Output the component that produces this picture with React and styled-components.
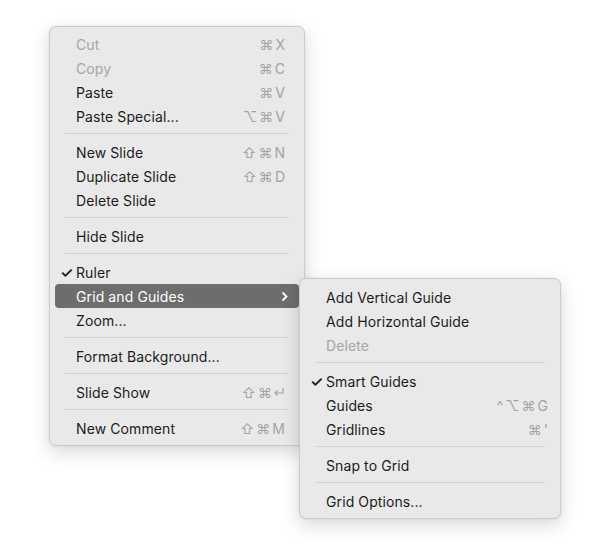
import React from 'react';
import styled, { createGlobalStyle } from 'styled-components';

const GlobalStyle = createGlobalStyle`
  body {
    margin: 0;
    background: #ffffff;
    font-family: Inter, "Noto Sans", "Liberation Sans", sans-serif;
    -webkit-font-smoothing: antialiased;
  }
`;

const Page = styled.div`
  width: 600px;
  height: 551px;
  padding: 26px 0 0 49px;
  box-sizing: border-box;
`;

const Menu = styled.div`
  position: relative;
  width: ${(p) => p.$width}px;
  box-sizing: border-box;
  padding: 5px 5px 5px;
  background: #e9e9e9;
  border: 1px solid #cbcbcb;
  border-radius: 7px;
  box-shadow: 0 6px 18px rgba(0, 0, 0, 0.16), 0 0 2px rgba(0, 0, 0, 0.08);
  display: flex;
  flex-direction: column;
`;

const SubMenu = styled(Menu)`
  position: absolute;
  left: 244px;
  top: -6px;
  z-index: 2;
  padding-top: 6px;
`;

const Item = styled.div`
  position: relative;
  height: 24px;
  display: flex;
  align-items: center;
  padding: 0 ${(p) => p.$padRight}px 0 21px;
  border-radius: 4px;
  font-size: 14px;
  letter-spacing: 0.1px;
  color: ${(p) => (p.$active ? '#ffffff' : p.$disabled ? '#a6a6a6' : '#1c1c1c')};
  background: ${(p) => (p.$active ? '#6d6d6d' : 'transparent')};
`;

const Check = styled.span`
  position: absolute;
  left: 5px;
  font-size: 15px;
  font-weight: 600;
`;

const Label = styled.span`
  flex: 1;
`;

const Shortcut = styled.span`
  color: #a3a3a3;
  font-size: 14px;
  letter-spacing: 2px;
  margin-right: -2px;
`;

const Arrow = styled.svg`
  width: 7px;
  height: 11px;
  margin-right: -3px;
`;

const Separator = styled.div`
  height: 1px;
  margin: 5px 10px 6px;
  background: #d2d2d2;
`;

function ReturnGlyph() {
  return (
    <svg width="13" height="11" viewBox="0 0 13 11" style={{ verticalAlign: '-1px' }}>
      <path d="M11 1 V6 H3 M5.5 3.5 L3 6 L5.5 8.5" fill="none" stroke="#a3a3a3" strokeWidth="1.2" />
    </svg>
  );
}

function MenuItem({ label, shortcut, disabled, checked, active, children, padRight = 14 }) {
  return (
    <Item $disabled={disabled} $active={active} $padRight={padRight}>
      {checked && <Check>✓</Check>}
      <Label>{label}</Label>
      {shortcut && <Shortcut>{shortcut}</Shortcut>}
      {children}
    </Item>
  );
}

export default function App() {
  return (
    <Page>
      <GlobalStyle />
      <Menu $width={256}>
        <MenuItem label="Cut" shortcut="⌘X" disabled />
        <MenuItem label="Copy" shortcut="⌘C" disabled />
        <MenuItem label="Paste" shortcut="⌘V" />
        <MenuItem label="Paste Special..." shortcut="⌥⌘V" />
        <Separator />
        <MenuItem label="New Slide" shortcut="⇧⌘N" />
        <MenuItem label="Duplicate Slide" shortcut="⇧⌘D" />
        <MenuItem label="Delete Slide" />
        <Separator />
        <MenuItem label="Hide Slide" />
        <Separator />
        <MenuItem label="Ruler" checked />
        <MenuItem label="Grid and Guides" active>
          <Arrow viewBox="0 0 7 11">
            <path d="M1.5 1.5 L5.5 5.5 L1.5 9.5" fill="none" stroke="#ffffff" strokeWidth="1.8" />
          </Arrow>
          <SubMenu $width={262}>
            <MenuItem label="Add Vertical Guide" padRight={7} />
            <MenuItem label="Add Horizontal Guide" padRight={7} />
            <MenuItem label="Delete" disabled padRight={7} />
            <Separator />
            <MenuItem label="Smart Guides" checked padRight={7} />
            <MenuItem label="Guides" shortcut="^⌥⌘G" padRight={7} />
            <MenuItem label="Gridlines" shortcut="⌘'" padRight={7} />
            <Separator />
            <MenuItem label="Snap to Grid" padRight={7} />
            <Separator />
            <MenuItem label="Grid Options..." padRight={7} />
          </SubMenu>
        </MenuItem>
        <MenuItem label="Zoom..." />
        <Separator />
        <MenuItem label="Format Background..." />
        <Separator />
        <MenuItem label="Slide Show">
          <Shortcut>⇧⌘</Shortcut>
          <ReturnGlyph />
        </MenuItem>
        <Separator />
        <MenuItem label="New Comment" shortcut="⇧⌘M" />
      </Menu>
    </Page>
  );
}
